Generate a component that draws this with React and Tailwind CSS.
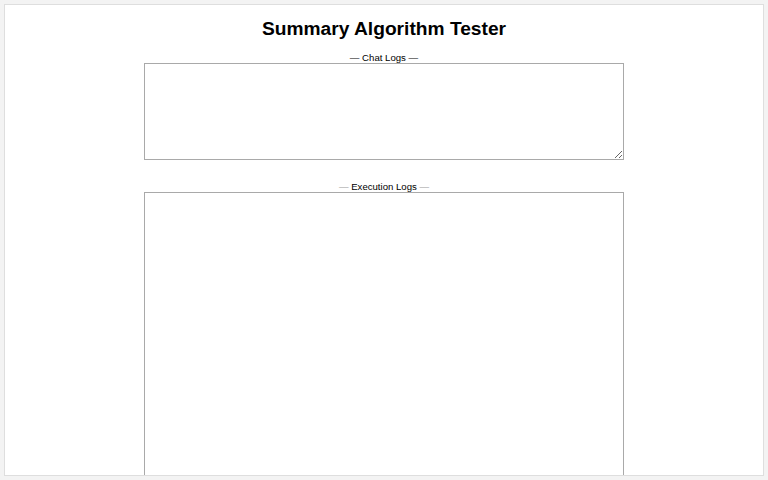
export default function App() {
  return (
    <div className="h-screen bg-[#f3f3f3] p-[4px] font-['Liberation_Sans',Arial,sans-serif] text-black">
      <div className="flex h-full flex-col items-center overflow-hidden border border-[#dedede] bg-white">
        <h1 className="mt-[13px] text-[19.2px] font-bold leading-[22px]">Summary Algorithm Tester</h1>

        <div className="mt-[12px] flex flex-col items-center">
          <span className="text-[9.6px] leading-[11px]">— Chat Logs —</span>
          <textarea className="h-[97px] w-[480px] border border-[#a9a9a9] outline-none" />
        </div>

        <div className="mt-[21px] flex flex-col items-center">
          <span className="text-[9.6px] leading-[11px]">
            <span className="text-[#999]">—</span> Execution Logs <span className="text-[#999]">—</span>
          </span>
          <textarea className="h-[340px] w-[480px] shrink-0 resize-none border border-[#a9a9a9] outline-none" />
        </div>
      </div>
    </div>
  );
}
